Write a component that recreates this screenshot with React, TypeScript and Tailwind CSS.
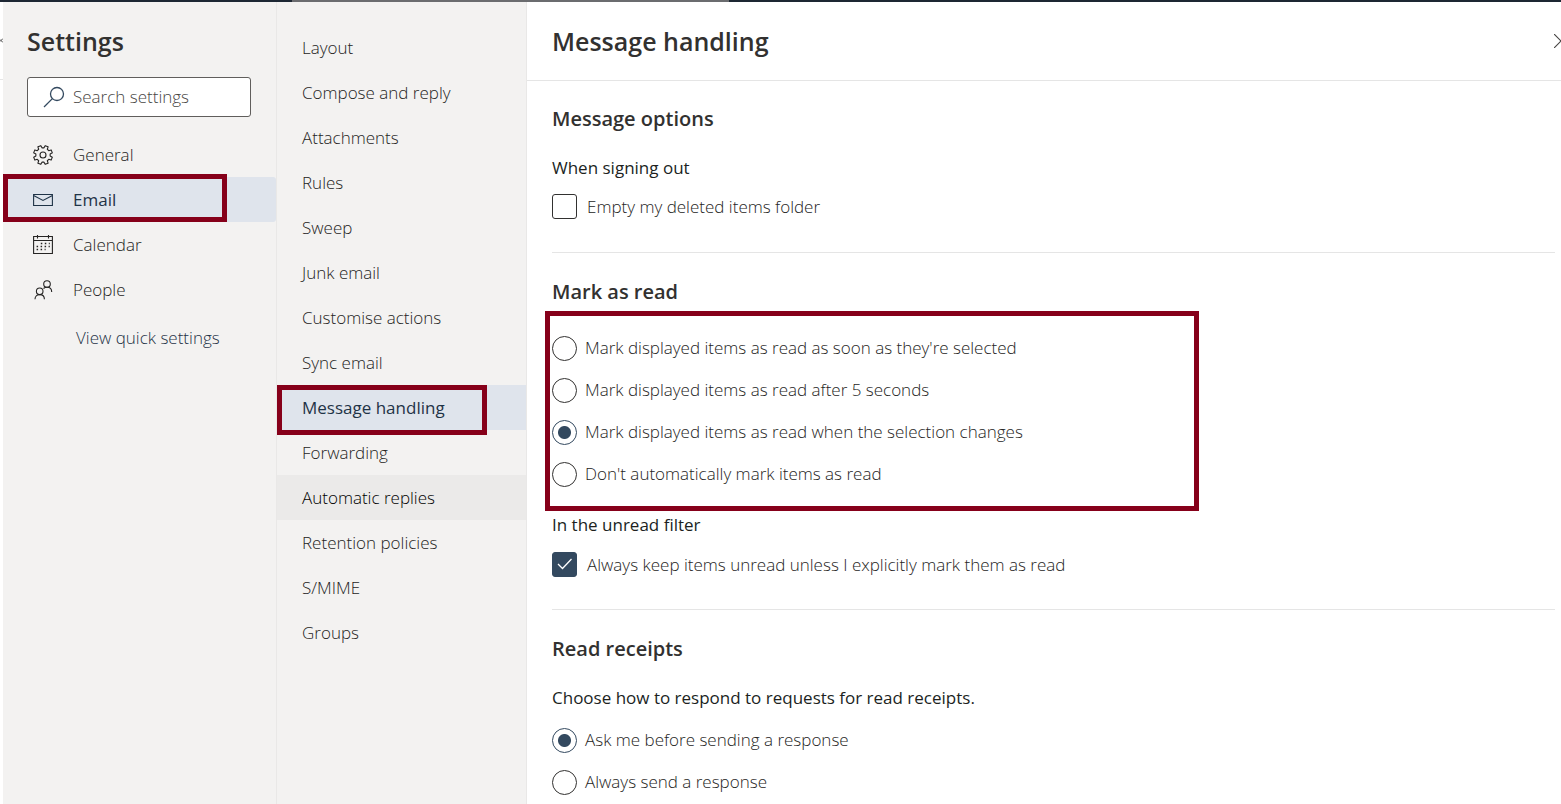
import type { ReactNode } from "react";

const mailSections = [
  "Layout",
  "Compose and reply",
  "Attachments",
  "Rules",
  "Sweep",
  "Junk email",
  "Customise actions",
  "Sync email",
  "Message handling",
  "Forwarding",
  "Automatic replies",
  "Retention policies",
  "S/MIME",
  "Groups",
];

const gearPath = (() => {
  const points: string[] = [];
  const profile: [number, number][] = [
    [-13, 9.6],
    [-8, 7.2],
    [8, 7.2],
    [13, 9.6],
  ];
  for (let i = 0; i < 8; i++) {
    for (const [offset, radius] of profile) {
      const a = ((i * 45 + offset) * Math.PI) / 180;
      points.push(`${(10 + radius * Math.cos(a)).toFixed(2)} ${(10 + radius * Math.sin(a)).toFixed(2)}`);
    }
  }
  return `M${points.join("L")}Z`;
})();

function Icon({ children }: { children: ReactNode }) {
  return (
    <svg viewBox="0 0 20 20" className="size-5 shrink-0" fill="none" stroke="currentColor" strokeWidth="1.1" aria-hidden="true">
      {children}
    </svg>
  );
}

const GearIcon = () => (
  <Icon>
    <path d={gearPath} strokeLinejoin="round" />
    <circle cx="10" cy="10" r="3" />
  </Icon>
);

const MailIcon = () => (
  <Icon>
    <path d="M.6 4.500h18.800v11H.6zM.6 5.500l9.400 5 9.400-5" />
  </Icon>
);

const CalendarIcon = () => (
  <Icon>
    <path d="M.6 1.500h18.800v17H.6zM.6 5.500h18.800M4.500 0v3.500M15.500 0v3.500" />
    <path d="M7.800 8.500h9M3.600 11.500h13.200M3.600 14.500h9" strokeWidth="1.400" strokeDasharray="1.500 2.500" />
  </Icon>
);

const PeopleIcon = () => (
  <Icon>
    <circle cx="6.700" cy="11.300" r="3.300" />
    <path d="M2 19.200c0-2.800 2-4.600 4.700-4.600s4.700 1.800 4.700 4.600" />
    <circle cx="14" cy="4" r="3.300" />
    <path d="M10.500 8.500c.9-.8 2.100-1.200 3.500-1.200 2.700 0 4.700 1.800 4.700 4.600" />
  </Icon>
);

const categories = [
  { name: "General", icon: <GearIcon />, current: false },
  { name: "Email", icon: <MailIcon />, current: true },
  { name: "Calendar", icon: <CalendarIcon />, current: false },
  { name: "People", icon: <PeopleIcon />, current: false },
];

function Highlight({ className }: { className: string }) {
  return <span aria-hidden="true" className={`pointer-events-none absolute border-[5px] border-[#86001a] ${className}`} />;
}

function Radio({ name, label, checked }: { name: string; label: string; checked?: boolean }) {
  return (
    <label className="flex h-[42px] items-center gap-2">
      <input
        type="radio"
        name={name}
        defaultChecked={checked}
        className="size-[25px] shrink-0 appearance-none rounded-full border border-[#323130] bg-white checked:border-[#33495f] checked:bg-[radial-gradient(circle,#33495f_6px,white_7px)]"
      />
      {label}
    </label>
  );
}

function Checkbox({ label, checked }: { label: string; checked?: boolean }) {
  return (
    <label className="flex items-center gap-[10px]">
      <span className="grid size-[25px] shrink-0">
        <input
          type="checkbox"
          defaultChecked={checked}
          className="peer col-start-1 row-start-1 size-[25px] appearance-none rounded-[3px] border border-[#323130] bg-white checked:border-[#33495f] checked:bg-[#33495f]"
        />
        <svg
          viewBox="0 0 25 25"
          className="pointer-events-none invisible col-start-1 row-start-1 peer-checked:visible"
          fill="none"
          stroke="white"
          strokeWidth="1.300"
          aria-hidden="true"
        >
          <path d="M6 12l4.500 4.500 9-9.500" />
        </svg>
      </span>
      {label}
    </label>
  );
}

export default function App() {
  return (
    <div className="flex min-h-screen flex-col overflow-hidden bg-white font-['Open_Sans','Noto_Sans',sans-serif] text-[17px] leading-6 font-light text-[#252423]">
      <div className="flex h-[2px] bg-[#1d2733]">
        <div className="ml-[292px] w-[437px] bg-[#6b6c6f]" />
      </div>

      <div className="flex grow">
        <div className="w-[3px] shrink-0 overflow-hidden">
          <div className="flex h-[78px] items-center border-b border-[#e5e5e5]">
            <svg viewBox="0 0 3 5" className="h-[5px] w-[3px] shrink-0 text-[#444]" fill="none" stroke="currentColor" aria-hidden="true">
              <path d="M3 .5l-2 2 2 2M0 1.500l1 1-1 1" />
            </svg>
          </div>
        </div>

        <aside className="w-[274px] shrink-0 border-r border-[#e9e8e7] bg-[#f3f2f1]">
          <h1 className="px-6 pt-[23px] text-[25px] leading-8 font-semibold text-[#323130]">Settings</h1>
          <label className="mt-5 mr-[25px] ml-6 flex h-10 items-center gap-2 rounded-[3px] border border-[#605e5c] bg-white px-[15px]">
            <svg viewBox="0 0 22 22" className="size-[22px] shrink-0 text-[#33495f]" fill="none" stroke="currentColor" strokeWidth="1.300" aria-hidden="true">
              <circle cx="14" cy="8" r="6.500" />
              <path d="M9.400 12.600L1 21" />
            </svg>
            <input
              type="search"
              aria-label="Search settings"
              placeholder="Search settings"
              className="w-full min-w-0 bg-transparent outline-none placeholder:text-[#484644]"
            />
          </label>
          <nav aria-label="Settings categories" className="mt-[15px]">
            {categories.map(({ name, icon, current }) => (
              <div key={name} className="relative">
                <button
                  type="button"
                  aria-current={current ? "page" : undefined}
                  className={`flex h-[45px] w-full items-center gap-5 pl-[30px] text-left ${
                    current ? "rounded-[3px] bg-[#dfe4ec] font-medium text-[#1f3347]" : ""
                  }`}
                >
                  {icon}
                  {name}
                </button>
                {current && <Highlight className="-top-[3px] right-[49px] bottom-0 left-0" />}
              </div>
            ))}
          </nav>
          <a href="#quick" className="mt-[14px] ml-[73px] block text-[#1f3347]">
            View quick settings
          </a>
        </aside>

        <nav aria-label="Email settings" className="w-[250px] shrink-0 border-r border-[#e9e8e7] bg-[#f3f2f1] pt-[23px]">
          {mailSections.map((name) => {
            const current = name === "Message handling";
            const hovered = name === "Automatic replies";
            return (
              <div key={name} className="relative">
                <button
                  type="button"
                  aria-current={current ? "page" : undefined}
                  className={`h-[45px] w-full px-[25px] text-left ${
                    current ? "bg-[#dfe4ec] font-medium text-[#1f3347]" : hovered ? "bg-[#ebeae9] text-black" : ""
                  }`}
                >
                  {name}
                </button>
                {current && <Highlight className="top-0 right-[39px] -bottom-[5px] left-0" />}
              </div>
            );
          })}
        </nav>

        <main className="min-w-0 grow">
          <header className="flex h-[79px] items-center justify-between overflow-hidden border-b border-[#e5e5e5] pl-[25px]">
            <h2 className="text-[25px] leading-8 font-semibold text-[#323130]">Message handling</h2>
            <button type="button" aria-label="Close" className="-mr-[7px] shrink-0 text-[#484644]">
              <svg viewBox="0 0 14 14" className="size-[14px]" fill="none" stroke="currentColor" strokeWidth="1.200" aria-hidden="true">
                <path d="M0 0l14 14M14 0L0 14" />
              </svg>
            </button>
          </header>

          <div className="pr-[6px] pl-[25px]">
            <section className="border-b border-[#e5e5e5] pt-6 pb-[33px]">
              <h3 className="text-[20px] leading-7 font-semibold text-[#323130]">Message options</h3>
              <h4 className="mt-[23px] mb-[14px] font-medium text-[#201f1e]">When signing out</h4>
              <Checkbox label="Empty my deleted items folder" />
            </section>

            <section className="border-b border-[#e5e5e5] pt-[25px] pb-8">
              <h3 className="text-[20px] leading-7 font-semibold text-[#323130]">Mark as read</h3>
              <div role="radiogroup" aria-label="Mark as read" className="relative mt-[21px]">
                <Radio name="mark" label="Mark displayed items as read as soon as they're selected" />
                <Radio name="mark" label="Mark displayed items as read after 5 seconds" />
                <Radio name="mark" label="Mark displayed items as read when the selection changes" checked />
                <Radio name="mark" label="Don't automatically mark items as read" />
                <Highlight className="-top-4 -bottom-4 -left-[7px] w-[654px]" />
              </div>
              <h4 className="mt-[18px] mb-[15px] font-medium text-[#201f1e]">In the unread filter</h4>
              <Checkbox label="Always keep items unread unless I explicitly mark them as read" checked />
            </section>

            <section className="pt-[25px]">
              <h3 className="text-[20px] leading-7 font-semibold text-[#323130]">Read receipts</h3>
              <h4 className="mt-[23px] mb-[9px] font-medium text-[#201f1e]">Choose how to respond to requests for read receipts.</h4>
              <div role="radiogroup" aria-label="Read receipts">
                <Radio name="receipts" label="Ask me before sending a response" checked />
                <Radio name="receipts" label="Always send a response" />
              </div>
            </section>
          </div>
        </main>
      </div>
    </div>
  );
}
